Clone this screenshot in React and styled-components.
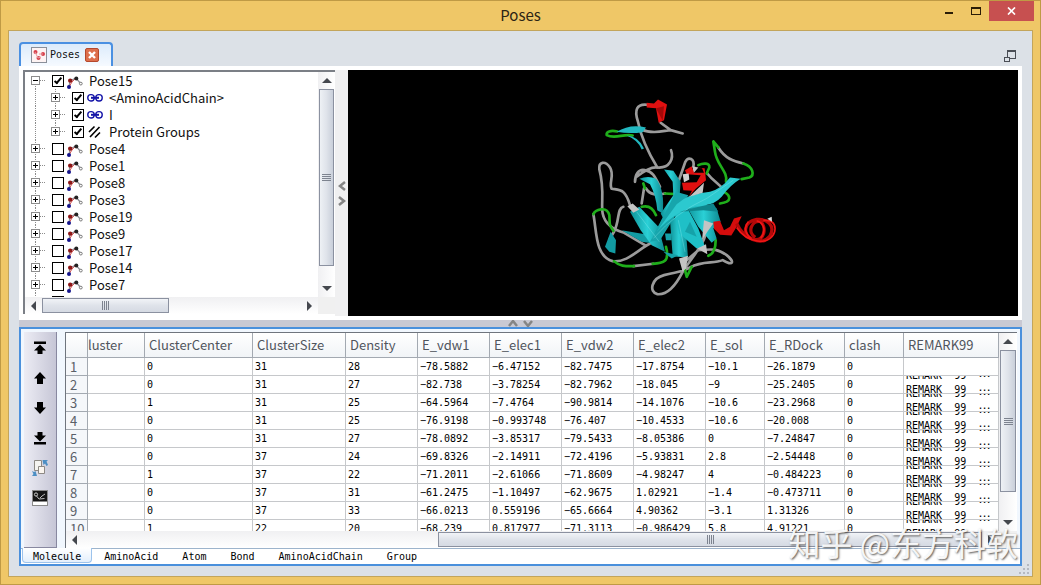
import React from 'react';
import styled, { createGlobalStyle, css } from 'styled-components';

const Global = createGlobalStyle`
  *, *::before, *::after { box-sizing: border-box; }
  body { margin: 0; background: #efc767; }
  button { border: 0; padding: 0; margin: 0; background: none; color: inherit; font: inherit; }
`;

const UI = `"Noto Sans CJK SC", "Noto Sans", sans-serif`;
const MONO = `"DejaVu Sans Mono", "Liberation Mono", monospace`;

/* ---------- window frame ---------- */

const Window = styled.div`
  position: relative;
  display: flex;
  flex-direction: column;
  height: 100vh;
  min-height: 480px;
  padding: 0 7px 7px;
  border: 1px solid #bf9a45;
  background: #efc767;
  font: 13px/17px ${UI};
  color: #111;
`;

const TitleBar = styled.header`
  display: grid;
  grid-template-columns: 1fr auto 1fr;
  flex: 0 0 29px;
`;

const Title = styled.h1`
  grid-column: 2;
  margin: 0;
  font: 15px/28px ${UI};
  color: #2c2415;
`;

const WindowButtons = styled.div`
  display: flex;
  justify-content: flex-end;
  align-items: flex-start;
  margin-right: -1px;
`;

const WindowButton = styled.button`
  display: grid;
  place-items: center;
  width: ${(p) => (p.$close ? 45 : 27)}px;
  height: 20px;
  background: ${(p) => (p.$close ? '#c75050' : 'transparent')};
`;

const Client = styled.main`
  display: flex;
  flex-direction: column;
  flex: 1;
  min-height: 0;
  padding: 11px 10px 10px;
  border: 1px solid #c3a55b;
  background: #dce1e7;
`;

const TabStrip = styled.div`
  display: flex;
  justify-content: space-between;
  align-items: flex-end;
  flex: 0 0 24px;
`;

const DocTab = styled.div`
  display: flex;
  align-items: center;
  gap: 3px;
  height: 24px;
  padding: 0 12px 0 10px;
  border: 2px solid #4a90e2;
  border-bottom: 0;
  border-radius: 4px 4px 0 0;
  background: linear-gradient(#dcebfb, #f6faff);
  font: 10px/16px ${MONO};
`;

const TabClose = styled.button`
  display: grid;
  place-items: center;
  width: 14px;
  height: 14px;
  margin-left: 2px;
  border: 1px solid #b5482c;
  border-radius: 2px;
  background: #dd6e4c;
`;

const Restore = styled.button`
  display: grid;
  place-items: center;
  width: 24px;
  height: 20px;
`;

/* ---------- upper pane ---------- */

const Upper = styled.section`
  display: flex;
  flex: 254 1 0;
  min-height: 0;
  padding: 4px;
  background: #fff;
`;

const TreePane = styled.div`
  display: grid;
  grid-template: minmax(0, 1fr) 17px / minmax(0, 1fr) 17px;
  flex: 0 0 312px;
  margin-bottom: 2px;
  border: solid #7b7f86;
  border-width: 2px 0 0 2px;
`;

const TreeList = styled.ul`
  margin: 0;
  padding: 0;
  overflow: hidden;
  list-style: none;
`;

const TreeRow = styled.li`
  display: flex;
  align-items: center;
  height: 17px;
`;

const TreeLabel = styled.label`
  display: flex;
  align-items: center;
  padding-left: 7px;
  white-space: nowrap;
`;

const TreeText = styled.span`
  margin-left: 6px;
  line-height: 16px;
`;

const Check = styled.input`
  appearance: none;
  display: grid;
  place-items: center;
  width: 12px;
  height: 12px;
  margin: 0 3px 0 0;
  border: 1px solid #000;
  outline: 0;
  background: #fff;
  &:checked::after {
    content: '';
    width: 4px;
    height: 8px;
    margin-top: -2px;
    border: solid #000;
    border-width: 0 2px 2px 0;
    transform: rotate(40deg);
  }
`;

const SideSplitter = styled.div`
  display: flex;
  flex-direction: column;
  align-items: center;
  justify-content: center;
  gap: 5px;
  flex: 0 0 13px;
  background: #f0f0f1;
`;

const Viewport = styled.div`
  flex: 1;
  min-width: 0;
  background: #000;
  svg { display: block; width: 100%; height: 100%; }
`;

const RowSplitter = styled.div`
  display: flex;
  align-items: center;
  justify-content: center;
  gap: 5px;
  flex: 0 0 7px;
  background: #c9c9d3;
`;

/* ---------- scroll bars ---------- */

const Bar = styled.div`
  display: flex;
  min-width: 0;
  min-height: 0;
  flex-direction: ${(p) => (p.$vertical ? 'column' : 'row')};
  background: linear-gradient(${(p) => (p.$vertical ? '90deg' : '180deg')}, #f0f0f2, #fff);
`;

const BarButton = styled.button`
  display: grid;
  place-items: center;
  flex: 0 0 17px;
`;

const Gap = styled.div`
  flex: ${(p) => p.$size} 1 0;
`;

const Thumb = styled.div`
  display: grid;
  place-items: center;
  flex: ${(p) => p.$size} 1 0;
  border: 1px solid #8b91a0;
  ${(p) => p.$vertical
    ? css`margin: 0 1px; background: linear-gradient(90deg, #eef1f5, #dfe3ea 50%, #c9cfda);`
    : css`margin: 1px 0; background: linear-gradient(#f1f3f7, #dfe3ea 50%, #d5dae3);`}
`;

const Corner = styled.div`
  background: #f0f0f0;
`;

/* ---------- lower pane ---------- */

const Lower = styled.section`
  display: flex;
  flex-direction: column;
  flex: 239 1 0;
  min-height: 0;
  padding: 3px 3px 0;
  border: 2px solid #4a90dc;
  background: #f1f7fe;
`;

const DataArea = styled.div`
  display: flex;
  flex: 1;
  gap: 8px;
  min-height: 0;
`;

const ToolBar = styled.div`
  display: flex;
  flex-direction: column;
  align-items: center;
  gap: 10px;
  flex: 0 0 33px;
  padding-top: 6px;
  border: solid #8888a0;
  border-width: 0 1px 1px 0;
  background: linear-gradient(90deg, #ececf4, #c6c6d6);
`;

const ToolButton = styled.button`
  display: grid;
  place-items: center;
  width: 20px;
  height: 20px;
`;

const Sheet = styled.div`
  display: grid;
  grid-template: minmax(0, 1fr) 17px / minmax(0, 1fr) 18px;
  flex: 1;
  min-width: 0;
  border: solid #6f757e;
  border-width: 1px 0 0 1px;
  background: #fff;
`;

const SheetClip = styled.div`
  overflow: hidden;
`;

const Table = styled.table`
  width: 100%;
  table-layout: fixed;
  border-collapse: separate;
  border-spacing: 0;
`;

const Head = styled.th`
  height: 25px;
  padding: 0 0 0 ${(p) => (p.$cut ? 0 : 4)}px;
  overflow: hidden;
  border: solid #a3a9b1;
  border-width: 0 1px 1px 0;
  background: linear-gradient(#fff, #f1f4f7);
  color: #50555d;
  font: 13px/24px ${UI};
  text-align: left;
  white-space: nowrap;
`;

const RowHead = styled.th`
  height: 18px;
  padding: 0 0 0 4px;
  overflow: hidden;
  border: solid #a3a9b1;
  border-width: 0 1px 1px 0;
  background: #f5f7fa;
  color: #5a6068;
  font: 13px/17px ${UI};
  text-align: left;
`;

const Cell = styled.td`
  height: 18px;
  padding: 0 0 0 2px;
  overflow: hidden;
  border: solid #c6c8cb;
  border-width: 0 1px 1px 0;
  color: #000;
  font: 10px/17px ${MONO};
  white-space: pre;
`;

const Remark = styled.div`
  display: flex;
  flex-direction: column;
  justify-content: center;
  height: 17px;
  padding-bottom: 4px;
  overflow: hidden;
`;

const RemarkLine = styled.span`
  display: flex;
  flex: none;
  height: 14px;
  line-height: 14px;
`;

const Dots = styled.span`
  font: 12px/14px "DejaVu Sans", sans-serif;
`;

const SheetTabs = styled.nav`
  display: flex;
  align-items: flex-start;
  flex: 0 0 16px;
  margin: 0 -3px;
  padding-left: 1px;
  border-top: 1px solid #9db4cc;
  background: #fff;
`;

const SheetTab = styled.button`
  height: 15px;
  padding: 0 12px;
  color: #000;
  font: 10px/14px ${MONO};
  ${(p) => p.$active && css`
    margin-top: -1px;
    padding: 2px 10px 0;
    border: 1px solid #9cc3ec;
    border-top: 0;
    border-radius: 0 0 4px 4px;
    background: linear-gradient(#fff, #e3effc);
  `}
`;

const Watermark = styled.div`
  position: absolute;
  right: 22px;
  bottom: 20px;
  color: rgba(255, 255, 255, 0.92);
  font: 32px/44px "Noto Sans CJK SC", sans-serif;
  text-shadow: 1px 1px 2px rgba(60, 60, 60, 0.85);
  white-space: nowrap;
  pointer-events: none;
`;

const Grip = styled.svg`
  position: absolute;
  right: 9px;
  bottom: 8px;
`;

/* ---------- icons ---------- */

const ARROWS = {
  up: 'M0 5L5 0L10 5Z',
  down: 'M0 0L5 5L10 0Z',
  left: 'M5 0L0 5L5 10Z',
  right: 'M0 0L5 5L0 10Z',
};

const Arrow = ({ dir }) => {
  const tall = dir === 'left' || dir === 'right';
  return (
    <svg width={tall ? 5 : 10} height={tall ? 10 : 5}>
      <path d={ARROWS[dir]} fill="#45484e" />
    </svg>
  );
};

const GripLines = ({ vertical }) => (
  <svg width="9" height="9" stroke="#7d838f" shapeRendering="crispEdges">
    <path d={vertical ? 'M0 1.5H9M0 3.5H9M0 5.5H9M0 7.5H9' : 'M1.5 0V9M3.5 0V9M5.5 0V9M7.5 0V9'} />
  </svg>
);

const ScrollBar = ({ vertical, before, thumb, after }) => (
  <Bar $vertical={vertical}>
    <BarButton aria-label={vertical ? 'Scroll up' : 'Scroll left'}><Arrow dir={vertical ? 'up' : 'left'} /></BarButton>
    <Gap $size={before} />
    <Thumb $vertical={vertical} $size={thumb}><GripLines vertical={vertical} /></Thumb>
    <Gap $size={after} />
    <BarButton aria-label={vertical ? 'Scroll down' : 'Scroll right'}><Arrow dir={vertical ? 'down' : 'right'} /></BarButton>
  </Bar>
);

const Trunk = ({ box, open, line = true, first, last }) => (
  <svg width="20" height="17" shapeRendering="crispEdges" fill="none">
    {line && <path d={`M10.5 ${first ? 8 : 0}V${last ? 8 : 17}`} stroke="#8c8c8c" strokeDasharray="1 1" />}
    {box && (
      <>
        <path d="M15 8.5H20" stroke="#8c8c8c" strokeDasharray="1 1" />
        <rect x="6.5" y="4.5" width="8" height="8" fill="#fff" stroke="#8c8c8c" />
        <path d={open ? 'M8 8.5H13' : 'M8 8.5H13M10.5 6V11'} stroke="#000" />
      </>
    )}
  </svg>
);

const PoseIcon = () => (
  <svg width="16" height="16" viewBox="0 0 16 16">
    <path d="M2 14L3 8L9 5L14 11" fill="none" stroke="#8d8d95" strokeWidth="1.3" />
    <path d="M2 14L5 9L8 6" fill="none" stroke="#d65a5a" />
    <circle cx="3.2" cy="7.6" r="2.2" fill="#8d1616" />
    <circle cx="2" cy="14" r="2" fill="#14148c" />
    <circle cx="9.3" cy="5.6" r="2" fill="#222" />
    <circle cx="13.8" cy="10.6" r="1.4" fill="#fff" stroke="#777" />
  </svg>
);

const ChainIcon = () => (
  <svg width="16" height="16" viewBox="0 0 16 16" fill="none" stroke="#1414a8" strokeWidth="1.4">
    <rect x=".8" y="4.6" width="6.4" height="6.4" rx="3" />
    <rect x="8.800" y="4.600" width="6.400" height="6.400" rx="3" />
    <path d="M4 7.800H12" strokeWidth="2" />
  </svg>
);

const GroupIcon = () => (
  <svg width="16" height="16" viewBox="0 0 16 16" fill="none" stroke="#000" strokeWidth="1.6">
    <path d="M2 8L7.500 2.500M3 13L12.500 3M8 13.500L13 8.500" />
  </svg>
);

const TREE_ICONS = { pose: PoseIcon, chain: ChainIcon, group: GroupIcon };

const TOOLS = [
  ['Move to top', <path key="a" d="M2 1.5H14V4H2ZM8 4.5L14 10.500H10.500V14H5.500V10.500H2Z" fill="#000" />],
  ['Move up', <path key="a" d="M8 2L14 8.500H11V14H5V8.500H2Z" fill="#000" />],
  ['Move down', <path key="a" d="M8 14L14 7.500H11V2H5V7.500H2Z" fill="#000" />],
  ['Move to bottom', <path key="a" d="M2 12H14V14.500H2ZM8 11.500L14 5.500H10.500V2H5.500V5.500H2Z" fill="#000" />],
  ['Copy to row', (
    <g key="a">
      <path d="M2.500 .5H9.500V10.500H2.500Z" fill="#f5f3f0" stroke="#8d8984" />
      <path d="M6.500 6.500H12.500V13.500H6.500Z" fill="#fbf6f0" stroke="#8d8984" />
      <path d="M10.500 0H16L14.500 1.500L16 5L14.500 6L13 3.500L11.500 5Z" fill="#4d8fc4" />
      <path d="M0 11L2 12L3.500 11L5 16H0L1.500 14Z" fill="#4d8fc4" />
    </g>
  )],
  ['Structure view', (
    <g key="a">
      <rect x=".5" y=".5" width="15" height="15" fill="#fff" stroke="#8a8a8a" />
      <rect x="1" y="1" width="14" height="10.500" fill="#161616" />
      <circle cx="4" cy="4.500" r="1.600" fill="none" stroke="#ccc" />
      <path d="M4.500 6L7 9L12.500 8.500M8 8L10 6L13 4" fill="none" stroke="#bbb" />
    </g>
  )],
];

/* Ribbon drawing of the docked complex */
const Protein = () => (
  <svg viewBox="-666 -30 2010 738" role="img" aria-label="Protein ribbon model">
    <defs>
      <linearGradient id="cy" x1="0" y1="0" x2="1" y2="0">
        <stop offset="0" stopColor="#0e9298" />
        <stop offset=".5" stopColor="#2ad0d6" />
        <stop offset="1" stopColor="#0d8990" />
      </linearGradient>
    </defs>
    <g fill="none" strokeLinecap="round" strokeLinejoin="round" strokeWidth="8">
      <g stroke="#9b9b9b">
        <path d="M232 74C200 70 192 90 204 125C212 165 230 210 262 262C300 265 312 235 303 210" />
        <path d="M215 148C250 165 285 150 302 150L338 160M272 128L302 150" />
        <path d="M180 375C165 325 150 330 125 326C115 310 135 285 120 262C105 240 85 245 88 268C105 330 92 370 98 400C104 430 130 450 160 457L225 495" />
        <path d="M70 402C80 450 75 530 128 543C175 548 205 505 250 485" />
        <path d="M160 380C140 385 150 420 132 455L120 475" />
        <path d="M195 305C195 285 205 265 225 270C250 275 255 290 270 320M200 290C225 270 245 260 262 262" />
        <path d="M222 325L215 370M228 325C240 345 260 345 285 340M370 260C375 235 355 228 346 245L320 320" />
        <path d="M412 280C435 310 450 310 460 330M445 202C465 235 490 243 520 250" />
        <path d="M410 440C410 490 365 530 338 575C315 620 290 645 262 642C235 635 245 595 282 585C320 575 340 575 360 562C400 540 430 552 458 540C490 560 495 545 470 525C435 500 420 510 385 510L345 545" />
        <path d="M190 558L250 551" />
      </g>
      <g stroke="#1fae1b">
        <path d="M188 166C160 160 135 178 110 165C108 154 122 150 142 154" />
        <path d="M430 184L435 215C440 255 475 275 468 305M430 184L445 202M520 250C550 260 555 285 538 292L515 297" />
        <path d="M385 255C400 248 420 248 418 262L410 280M462 335C480 345 490 365 450 370" />
        <path d="M70 402C75 390 110 375 118 405C120 430 115 430 130 452" />
        <path d="M132 543C150 560 170 558 192 558M248 551C280 550 300 545 288 500" />
        <path d="M220 310L225 325M285 340L318 342L322 375M215 380C235 375 250 385 258 405M437 480C437 500 432 520 415 527M345 570L350 590L365 560" />
      </g>
    </g>
    <path d="M140 155Q180 130 228 142L218 156Q180 162 140 155ZM170 166Q205 168 222 205L215 208Q205 180 170 166Z" fill="#22b8c0" />
    <path d="M105 500L122 455L138 480L136 520L118 515ZM155 450L225 462L250 490L215 485Z" fill="#129ba2" />
    <path d="M208 296Q235 285 258 296Q285 330 278 400L262 390Q258 345 240 312Z" fill="url(#cy)" />
    <path d="M282 268L310 272L332 305L328 360L280 415L272 400L310 345L308 305Z" fill="url(#cy)" />
    <path d="M180 395L208 380L265 440L285 515L245 495L212 450Z" fill="url(#cy)" />
    <path d="M300 420L335 400L348 455L354 532L308 528Z" fill="url(#cy)" />
    <path d="M312 395L350 380L385 445L405 500L380 505L328 460Z" fill="#1fc0c7" />
    <path d="M350 380L385 365L440 385L452 425L430 445L440 475L425 488L385 440Z" fill="url(#cy)" />
    <path d="M318 335L355 345L320 400L270 480L240 485Z" fill="#17a5ac" />
    <path d="M238 485L320 372Q355 340 420 335Q455 325 480 292L512 296Q480 315 455 350Q435 372 405 375Q345 380 310 410Q265 440 238 485Z" fill="#2cc9cf" />
    <path d="M330 395Q380 380 430 370L445 395L400 390Z" fill="#0e858c" />
    <path d="M345 455L360 425L380 470M280 515L325 525L305 535ZM285 460H305V480H288Z" fill="#15a2a9" />
    <path d="M172 378L188 370L208 388L190 398ZM327 535L354 527L348 565L338 575ZM382 505L408 492L412 522ZM402 420L430 430L412 455L396 480ZM358 350L402 308L398 338ZM368 258L385 262L370 280Z" fill="#c4c4c4" />
    <path d="M230 68L252 70L264 58L291 73L282 120L266 128L258 84L230 82Z" fill="#e01010" />
    <path d="M258 84L282 78L278 122Z" fill="#a50808" />
    <path d="M345 270L365 258L372 278L402 278L396 264L375 262L404 264L408 300L378 325L356 350L366 332L340 330L336 308L380 306L392 285L350 282Z" fill="#e01010" />
    <path d="M338 282L356 280L358 298L342 306Z" fill="#d0d0d0" />
    <path d="M430 425L450 422L462 450L480 440L492 415L515 408L500 440L484 466L450 464L432 446Z" fill="#d40c0c" />
    <g fill="none" strokeWidth="10">
      <path d="M500 430C520 475 575 500 600 468C618 435 590 415 560 418C520 425 515 465 550 478C585 485 590 440 572 424C545 420 530 455 556 472" stroke="#b50808" />
      <path d="M500 442C530 488 600 500 614 455C620 425 600 420 580 420M535 425C518 445 530 465 545 476M560 422C585 430 588 455 572 474" stroke="#f01616" strokeWidth="5" />
    </g>
    <path d="M592 416L605 410L606 425Z" fill="#ddd" />
    <g fill="none" stroke="#8ff0f2" strokeWidth="2" opacity=".5">
      <path d="M250 475Q320 395 410 355L490 300M200 395L268 485M325 420L345 515" />
    </g>
  </svg>
);

/* ---------- data ---------- */

const TREE = [
  { name: 'Pose15', icon: 'pose', on: true, open: true },
  { name: '<AminoAcidChain>', icon: 'chain', on: true, child: true },
  { name: 'I', icon: 'chain', on: true, child: true },
  { name: 'Protein Groups', icon: 'group', on: true, child: true, last: true },
  ...['Pose4', 'Pose1', 'Pose8', 'Pose3', 'Pose19', 'Pose9', 'Pose17', 'Pose14', 'Pose7', ''].map((name) => ({ name, icon: 'pose' })),
];

const COLUMNS = [
  ['luster', 57], ['ClusterCenter', 108], ['ClusterSize', 93], ['Density', 72],
  ['E_vdw1', 72], ['E_elec1', 72], ['E_vdw2', 72], ['E_elec2', 72],
  ['E_sol', 59], ['E_RDock', 80], ['clash', 59], ['REMARK99', null],
];

const ROWS = [
  ['', '0', '31', '28', '-78.5882', '-6.47152', '-82.7475', '-17.8754', '-10.1', '-26.1879', '0'],
  ['', '0', '31', '27', '-82.738', '-3.78254', '-82.7962', '-18.045', '-9', '-25.2405', '0'],
  ['', '1', '31', '25', '-64.5964', '-7.4764', '-90.9814', '-14.1076', '-10.6', '-23.2968', '0'],
  ['', '0', '31', '25', '-76.9198', '-0.993748', '-76.407', '-10.4533', '-10.6', '-20.008', '0'],
  ['', '0', '31', '27', '-78.0892', '-3.85317', '-79.5433', '-8.05386', '0', '-7.24847', '0'],
  ['', '0', '37', '24', '-69.8326', '-2.14911', '-72.4196', '-5.93831', '2.8', '-2.54448', '0'],
  ['', '1', '37', '22', '-71.2011', '-2.61066', '-71.8609', '-4.98247', '4', '-0.484223', '0'],
  ['', '0', '37', '31', '-61.2475', '-1.10497', '-62.9675', '1.02921', '-1.4', '-0.473711', '0'],
  ['', '0', '37', '33', '-66.0213', '0.559196', '-65.6664', '4.90362', '-3.1', '1.31326', '0'],
  ['', '1', '22', '20', '-68.239', '0.817977', '-71.3113', '-0.986429', '5.8', '4.91221', '0'],
];

const SHEETS = ['Molecule', 'AminoAcid', 'Atom', 'Bond', 'AminoAcidChain', 'Group'];

const RemarkText = () => (
  <RemarkLine>{'REMARK  99  '}<Dots>⋯</Dots></RemarkLine>
);

export default function App() {
  return (
    <>
      <Global />
      <Window>
        <TitleBar>
          <Title>Poses</Title>
          <WindowButtons>
            <WindowButton aria-label="Minimize">
              <svg width="8" height="8"><path d="M0 5H8V7H0Z" fill="#2b1d06" /></svg>
            </WindowButton>
            <WindowButton aria-label="Maximize">
              <svg width="10" height="8"><path d="M0 0H10V8H0ZM1 2V7H9V2Z" fill="#2b1d06" fillRule="evenodd" /></svg>
            </WindowButton>
            <WindowButton $close aria-label="Close">
              <svg width="9" height="8"><path d="M1 .5L8 7.500M8 .5L1 7.500" stroke="#fff" strokeWidth="1.700" /></svg>
            </WindowButton>
          </WindowButtons>
        </TitleBar>

        <Client>
          <TabStrip>
            <DocTab>
              <svg width="16" height="16">
                <rect x=".5" y=".5" width="15" height="15" fill="#fdf3f3" stroke="#8a8f99" />
                <g fill="#d8414c">
                  <circle cx="4.500" cy="5" r="2" /><circle cx="12" cy="7" r="2" /><circle cx="7.500" cy="11" r="2" />
                </g>
                <path d="M4 5L7 11M8 7L12 7M7 11L10 10" stroke="#e69aa0" />
              </svg>
              <span>Poses</span>
              <TabClose aria-label="Close tab">
                <svg width="8" height="8"><path d="M1 1L7 7M7 1L1 7" stroke="#fff" strokeWidth="2.400" /></svg>
              </TabClose>
            </DocTab>
            <Restore aria-label="Restore pane">
              <svg width="12" height="12" fill="#dce1e7" stroke="#4a4e55">
                <rect x="3.500" y=".5" width="8" height="8" /><path d="M3 1.500H12" />
                <rect x=".5" y="7.500" width="5" height="4" />
              </svg>
            </Restore>
          </TabStrip>

          <Upper>
            <TreePane>
              <TreeList>
                {TREE.map((n, i) => {
                  const Icon = TREE_ICONS[n.icon];
                  return (
                    <TreeRow key={n.name}>
                      {n.child && <Trunk />}
                      <Trunk box open={n.open} last={n.last} first={i === 0} />
                      <TreeLabel>
                        <Check type="checkbox" defaultChecked={n.on} />
                        <Icon />
                        <TreeText>{n.name}</TreeText>
                      </TreeLabel>
                    </TreeRow>
                  );
                })}
              </TreeList>
              <ScrollBar vertical before={0} thumb={177} after={14} />
              <ScrollBar before={0} thumb={126} after={133} />
              <Corner />
            </TreePane>
            <SideSplitter>
              <svg width="8" height="10"><path d="M7 1L2 5L7 9" fill="none" stroke="#858585" strokeWidth="2.500" /></svg>
              <svg width="8" height="10"><path d="M1 1L6 5L1 9" fill="none" stroke="#858585" strokeWidth="2.500" /></svg>
            </SideSplitter>
            <Viewport><Protein /></Viewport>
          </Upper>

          <RowSplitter>
            <svg width="10" height="7"><path d="M1 6L5 1L9 6" fill="none" stroke="#858585" strokeWidth="2.500" /></svg>
            <svg width="10" height="7"><path d="M1 1L5 6L9 1" fill="none" stroke="#858585" strokeWidth="2.500" /></svg>
          </RowSplitter>

          <Lower>
            <DataArea>
              <ToolBar>
                {TOOLS.map(([name, art]) => (
                  <ToolButton key={name} aria-label={name}>
                    <svg width="16" height="16" viewBox="0 0 16 16">{art}</svg>
                  </ToolButton>
                ))}
              </ToolBar>
              <Sheet>
                <SheetClip>
                  <Table>
                    <colgroup>
                      <col width="22" />
                      {COLUMNS.map(([name, w]) => <col key={name} width={w || undefined} />)}
                    </colgroup>
                    <thead>
                      <tr>
                        <Head />
                        {COLUMNS.map(([name], i) => <Head key={name} $cut={i === 0}>{name}</Head>)}
                      </tr>
                    </thead>
                    <tbody>
                      {ROWS.map((row, r) => (
                        <tr key={r}>
                          <RowHead scope="row">{r + 1}</RowHead>
                          {row.map((v, c) => <Cell key={c}>{v.replace('-', '−')}</Cell>)}
                          <Cell>{r > 0 && <Remark><RemarkText /><RemarkText /></Remark>}</Cell>
                        </tr>
                      ))}
                    </tbody>
                  </Table>
                </SheetClip>
                <ScrollBar vertical before={0} thumb={142} after={22} />
                <ScrollBar before={355} thumb={542} after={0} />
                <Corner />
              </Sheet>
            </DataArea>
            <SheetTabs>
              {SHEETS.map((name, i) => <SheetTab key={name} $active={i === 0}>{name}</SheetTab>)}
            </SheetTabs>
          </Lower>
        </Client>

        <Watermark>知乎 @东方科软</Watermark>
        <Grip width="12" height="12" fill="#b4b9c1">
          <path d="M8 0H10V2H8ZM8 4H10V6H8ZM8 8H10V10H8ZM4 4H6V6H4ZM4 8H6V10H4ZM0 8H2V10H0Z" />
        </Grip>
      </Window>
    </>
  );
}
